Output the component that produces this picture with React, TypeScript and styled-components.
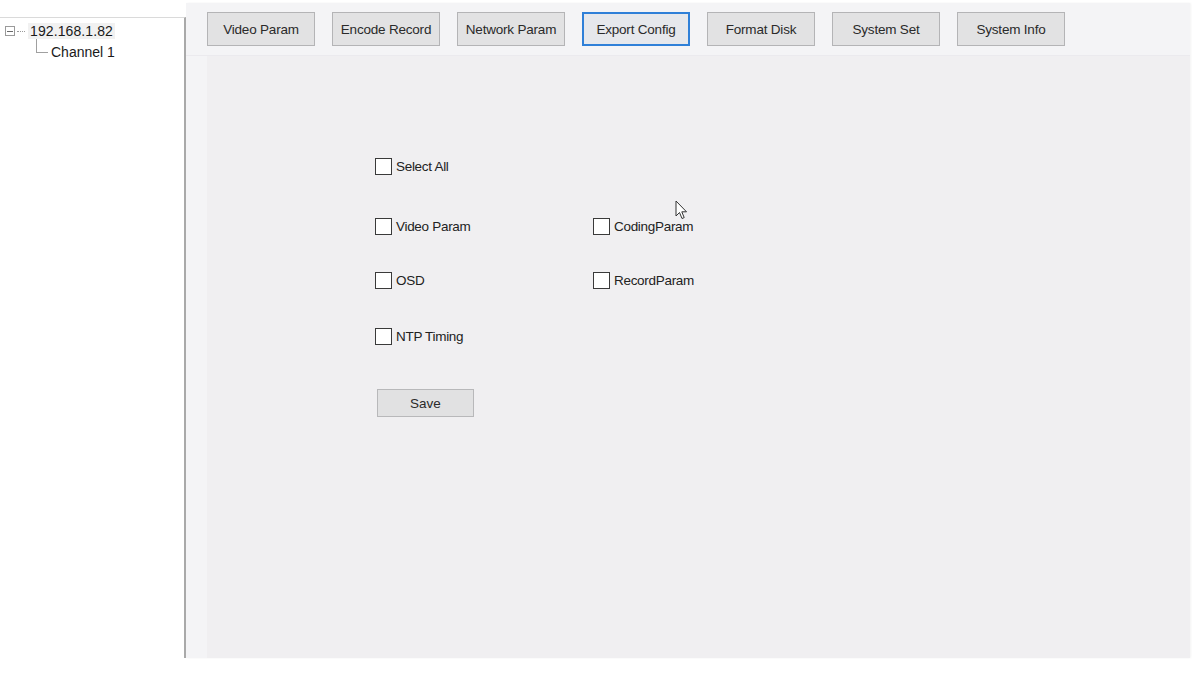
import styled, { createGlobalStyle } from "styled-components";
import { JSX } from "react";

const GlobalStyle = createGlobalStyle`
  html, body {
    margin: 0;
    padding: 0;
    background: #ffffff;
  }
  body {
    font-family: "Liberation Sans", Arial, sans-serif;
    color: #1e1e1e;
  }
  * {
    box-sizing: border-box;
  }
`;

const Window = styled.div`
  width: 1200px;
  height: 680px;
  display: flex;
  align-items: flex-start;
  background: #ffffff;
`;

const TreePanel = styled.div`
  width: 186px;
  height: 641px;
  margin-top: 17px;
  padding-top: 5px;
  background: #ffffff;
  border-top: 1px solid #dadada;
  border-right: 2px solid #a9a9a9;
  font-size: 14px;
`;

const TreeRow = styled.div`
  display: flex;
  align-items: center;
  height: 16px;
  padding-left: 5px;
`;

const Expander = styled.span`
  width: 10px;
  height: 10px;
  border: 1px solid #9a9a9a;
  display: flex;
  align-items: center;
  justify-content: center;

  &::after {
    content: "";
    width: 6px;
    height: 1px;
    background: #6a6a6a;
  }
`;

const DotLine = styled.span`
  width: 8px;
  margin: 0 3px 0 2px;
  border-top: 1px dotted #9a9a9a;
`;

const NodeLabel = styled.span<{ $selected?: boolean }>`
  padding: 0 2px;
  letter-spacing: 0.1px;
  color: #1a1a1a;
  background: ${({ $selected }) => ($selected ? "#f1f1f1" : "transparent")};
`;

const ChildRow = styled.div`
  display: flex;
  align-items: flex-end;
  height: 21px;
  padding-left: 36px;
`;

const Connector = styled.span`
  width: 12px;
  height: 14px;
  margin-bottom: 7px;
  border-left: 1px solid #a0a0a0;
  border-bottom: 1px solid #a0a0a0;
`;

const ChildLabel = styled.span`
  padding-left: 3px;
  line-height: 16px;
  color: #1a1a1a;
`;

const Main = styled.div`
  width: 1004px;
  height: 655px;
  margin-top: 3px;
  display: flex;
  flex-direction: column;
  background: #f4f4f6;
  box-shadow: 1px 0 2px rgba(0, 0, 0, 0.05);
`;

const Toolbar = styled.div`
  height: 53px;
  display: flex;
  gap: 17px;
  padding: 9px 0 0 21px;
  border-bottom: 1px solid #ebeaee;
`;

const TabButton = styled.button<{ $active?: boolean }>`
  width: 108px;
  height: 34px;
  padding: 0;
  font-family: "Liberation Sans", Arial, sans-serif;
  font-size: 13.5px;
  letter-spacing: -0.2px;
  color: #2a2a2a;
  background: ${({ $active }) => ($active ? "#e6e8ec" : "#e2e2e3")};
  border: ${({ $active }) => ($active ? "2px solid #2f80d8" : "1px solid #b4b4b6")};
  cursor: pointer;
`;

const ContentWrap = styled.div`
  flex: 1;
  display: flex;
  padding-left: 21px;
`;

const ContentPane = styled.div`
  flex: 1;
  position: relative;
  background: #f0eff1;
  padding: 101px 0 0 168px;
`;

const OptionGrid = styled.div`
  display: grid;
  grid-template-columns: 218px 200px;
`;

const OptionRow = styled.div<{ $gap: number }>`
  grid-column: 1 / -1;
  display: grid;
  grid-template-columns: 218px 200px;
  margin-top: ${({ $gap }) => $gap}px;
`;

const Option = styled.label`
  display: flex;
  align-items: center;
  gap: 4px;
  height: 18px;
  font-size: 13.5px;
  letter-spacing: -0.3px;
  color: #222222;
`;

const Box = styled.span`
  width: 17px;
  height: 17px;
  background: #ffffff;
  border: 1px solid #3a3a3a;
`;

const SaveButton = styled.button`
  width: 97px;
  height: 28px;
  margin: 44px 0 0 2px;
  padding: 0;
  font-family: "Liberation Sans", Arial, sans-serif;
  font-size: 13.5px;
  color: #2a2a2a;
  background: #e1e1e2;
  border: 1px solid #b8b8ba;
  cursor: pointer;
`;

const Pointer = styled.svg`
  position: absolute;
  left: 468px;
  top: 144px;
  width: 13px;
  height: 20px;
`;

const tabs = [
  "Video Param",
  "Encode Record",
  "Network Param",
  "Export Config",
  "Format Disk",
  "System Set",
  "System Info",
];

const rows: { gap: number; items: string[] }[] = [
  { gap: 0, items: ["Select All"] },
  { gap: 42, items: ["Video Param", "CodingParam"] },
  { gap: 36, items: ["OSD", "RecordParam"] },
  { gap: 38, items: ["NTP Timing"] },
];

const App = (): JSX.Element => {
  return (
    <>
      <GlobalStyle />
      <Window>
        <TreePanel>
          <TreeRow>
            <Expander />
            <DotLine />
            <NodeLabel $selected>192.168.1.82</NodeLabel>
          </TreeRow>
          <ChildRow>
            <Connector />
            <ChildLabel>Channel 1</ChildLabel>
          </ChildRow>
        </TreePanel>
        <Main>
          <Toolbar>
            {tabs.map((t) => (
              <TabButton key={t} $active={t === "Export Config"}>
                {t}
              </TabButton>
            ))}
          </Toolbar>
          <ContentWrap>
            <ContentPane>
              <OptionGrid>
                {rows.map((row, i) => (
                  <OptionRow key={i} $gap={row.gap}>
                    {row.items.map((item) => (
                      <Option key={item}>
                        <Box />
                        {item}
                      </Option>
                    ))}
                  </OptionRow>
                ))}
              </OptionGrid>
              <SaveButton>Save</SaveButton>
              <Pointer viewBox="0 0 13 20">
                <path
                  d="M1 1 L1 16 L4.5 12.5 L7 18.5 L9.2 17.6 L6.8 11.8 L11.5 11.8 Z"
                  fill="#ffffff"
                  stroke="#333333"
                  strokeWidth="1"
                  strokeLinejoin="round"
                />
              </Pointer>
            </ContentPane>
          </ContentWrap>
        </Main>
      </Window>
    </>
  );
};

export default App;
